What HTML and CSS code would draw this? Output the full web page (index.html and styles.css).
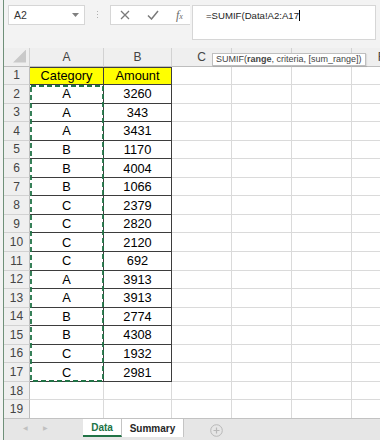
FILE: index.html
```html
<!DOCTYPE html>
<html lang="en">

<head>
    <meta charset="UTF-8">
    <title>SUMIF</title>
    <link rel="stylesheet" href="styles.css">
</head>

<body>
    <div class="app">
        <div class="toolbar">
            <div class="namebox">
                <span>A2</span>
                <svg width="7" height="4" viewBox="0 0 7 4"><path d="M0 0h7L3.5 4z" fill="#808080"/></svg>
            </div>
            <div class="grip"><span></span></div>
            <div class="fxbox">
                <svg width="10" height="10" viewBox="0 0 10 10"><path d="M1 1l8 8M9 1l-8 8" stroke="#7a7a7a" stroke-width="1.3" fill="none"/></svg>
                <svg width="12" height="10" viewBox="0 0 12 10"><path d="M1 5.5l3.5 3.5L11 1" stroke="#7a7a7a" stroke-width="1.5" fill="none"/></svg>
                <span class="fx">f<small>x</small></span>
            </div>
            <div class="formula">=SUMIF(Data!A2:A17<span class="caret"></span></div>
        </div>

        <div class="sheet">
            <div class="ch corner"><span></span></div>
            <div class="ch">A</div>
            <div class="ch">B</div>
            <div class="ch">C</div>
            <!-- D 和 E 被提示框挡住了 -->
            <div class="ch"></div>
            <div class="ch"></div>
            <div class="ch">F</div>

            <div class="rh">1</div><div class="c d top hd">Category</div><div class="c d top hd">Amount</div><div class="c"></div><div class="c"></div><div class="c"></div><div class="c"></div>
            <div class="rh">2</div><div class="c d">A</div><div class="c d">3260</div><div class="c"></div><div class="c"></div><div class="c"></div><div class="c"></div>
            <div class="rh">3</div><div class="c d">A</div><div class="c d">343</div><div class="c"></div><div class="c"></div><div class="c"></div><div class="c"></div>
            <div class="rh">4</div><div class="c d">A</div><div class="c d">3431</div><div class="c"></div><div class="c"></div><div class="c"></div><div class="c"></div>
            <div class="rh">5</div><div class="c d">B</div><div class="c d">1170</div><div class="c"></div><div class="c"></div><div class="c"></div><div class="c"></div>
            <div class="rh">6</div><div class="c d">B</div><div class="c d">4004</div><div class="c"></div><div class="c"></div><div class="c"></div><div class="c"></div>
            <div class="rh">7</div><div class="c d">B</div><div class="c d">1066</div><div class="c"></div><div class="c"></div><div class="c"></div><div class="c"></div>
            <div class="rh">8</div><div class="c d">C</div><div class="c d">2379</div><div class="c"></div><div class="c"></div><div class="c"></div><div class="c"></div>
            <div class="rh">9</div><div class="c d">C</div><div class="c d">2820</div><div class="c"></div><div class="c"></div><div class="c"></div><div class="c"></div>
            <div class="rh">10</div><div class="c d">C</div><div class="c d">2120</div><div class="c"></div><div class="c"></div><div class="c"></div><div class="c"></div>
            <div class="rh">11</div><div class="c d">C</div><div class="c d">692</div><div class="c"></div><div class="c"></div><div class="c"></div><div class="c"></div>
            <div class="rh">12</div><div class="c d">A</div><div class="c d">3913</div><div class="c"></div><div class="c"></div><div class="c"></div><div class="c"></div>
            <div class="rh">13</div><div class="c d">A</div><div class="c d">3913</div><div class="c"></div><div class="c"></div><div class="c"></div><div class="c"></div>
            <div class="rh">14</div><div class="c d">B</div><div class="c d">2774</div><div class="c"></div><div class="c"></div><div class="c"></div><div class="c"></div>
            <div class="rh">15</div><div class="c d">B</div><div class="c d">4308</div><div class="c"></div><div class="c"></div><div class="c"></div><div class="c"></div>
            <div class="rh">16</div><div class="c d">C</div><div class="c d">1932</div><div class="c"></div><div class="c"></div><div class="c"></div><div class="c"></div>
            <div class="rh">17</div><div class="c d">C</div><div class="c d">2981</div><div class="c"></div><div class="c"></div><div class="c"></div><div class="c"></div>
            <div class="rh">18</div><div class="c"></div><div class="c"></div><div class="c"></div><div class="c"></div><div class="c"></div><div class="c"></div>
            <div class="rh">19</div><div class="c"></div><div class="c"></div><div class="c"></div><div class="c"></div><div class="c"></div><div class="c"></div>

            <!-- 复制区域的虚线框 -->
            <svg class="ants" width="74" height="297" viewBox="0 0 74 297">
                <rect x="1" y="1" width="72" height="295" fill="none" stroke="#217346" stroke-width="1.8" stroke-dasharray="5 3"/>
            </svg>
            <div class="tip">SUMIF(<b>range</b>, criteria, [sum_range])</div>
        </div>

        <div class="tabs">
            <div class="nav"><span>&#9664;</span><span>&#9654;</span></div>
            <div class="tab active">Data</div>
            <div class="tab">Summary</div>
            <div class="add">
                <svg width="13" height="13" viewBox="0 0 13 13"><circle cx="6.5" cy="6.5" r="5.8" fill="none" stroke="#b8b8b8" stroke-width="1"/><path d="M6.5 3.5v6M3.5 6.5h6" stroke="#b8b8b8" stroke-width="1.2"/></svg>
            </div>
        </div>
    </div>
</body>

</html>
```

FILE: styles.css
```css
body {
    margin: 0px;
    width: 380px;
    height: 440px;
    overflow: hidden;
    background: #f3f3f3;
    font-family: "Liberation Sans", Arial, sans-serif;
    color: #000000;
}

.app {
    display: flex;
    flex-direction: column;
    height: 440px;
    margin-left: 3px;
    border-left: 1px solid #6f9079;
}

/* 上面的名称框和编辑栏 */
.toolbar {
    height: 48px;
    flex-shrink: 0;
    display: flex;
    align-items: flex-start;
    padding: 5px 4px 0px 4px;
    box-sizing: border-box;
}

.namebox {
    width: 77px;
    height: 20px;
    box-sizing: border-box;
    border: 1px solid #d6d6d6;
    background: #ffffff;
    display: flex;
    align-items: center;
    justify-content: space-between;
    padding: 0px 5px 0px 5px;
    font-size: 10.5px;
    color: #333333;
}

.grip {
    width: 25px;
    height: 20px;
    display: flex;
    align-items: center;
    justify-content: center;
}

.grip span {
    width: 1px;
    height: 9px;
    background: repeating-linear-gradient(#b0b0b0 0px, #b0b0b0 1px, transparent 1px, transparent 3px);
}

.fxbox {
    width: 80px;
    height: 20px;
    box-sizing: border-box;
    border: 1px solid #d6d6d6;
    border-right: none;
    background: #ffffff;
    display: flex;
    align-items: center;
    gap: 17px;
    padding-left: 9px;
}

.fx {
    font-family: "Liberation Serif", serif;
    font-style: italic;
    font-size: 12px;
    color: #6a6a6a;
}

.fx small {
    font-size: 8px;
}

.formula {
    flex: 1;
    height: 35px;
    margin-left: 2px;
    box-sizing: border-box;
    border: 1px solid #d6d6d6;
    background: #ffffff;
    padding: 4px 0px 0px 13px;
    font-size: 9.6px;
    line-height: 12px;
    color: #1e1e1e;
}

.caret {
    display: inline-block;
    width: 1px;
    height: 11px;
    background: #000000;
    vertical-align: -2px;
}

/* 表格 */
.sheet {
    flex: 1;
    position: relative;
    overflow: hidden;
    display: grid;
    grid-template-columns: 26px 74px 68px 60px 60px 60px 60px;
    grid-template-rows: 18.5px repeat(19, 18.55px);
    background: #ffffff;
    font-size: 12.8px;
}

.ch,
.rh {
    background: #efefef;
    color: #444444;
    display: flex;
    align-items: center;
    justify-content: center;
    box-sizing: border-box;
    font-size: 12px;
}

.ch {
    border-right: 1px solid #d2d2d2;
    border-bottom: 1px solid #bdbdbd;
}

.rh {
    border-right: 1px solid #bdbdbd;
    border-bottom: 1px solid #d2d2d2;
}

.corner {
    justify-content: flex-end;
    align-items: flex-end;
    padding: 0px 3px 3px 0px;
}

.corner span {
    width: 13px;
    height: 13px;
    background: #c9c9c9;
    clip-path: polygon(100% 0, 100% 100%, 0 100%);
}

.c {
    box-sizing: border-box;
    border-right: 1px solid #dadada;
    border-bottom: 1px solid #dadada;
    display: flex;
    align-items: center;
    justify-content: center;
}

.d {
    border-right-color: #3d3d3d;
    border-bottom-color: #3d3d3d;
}

.top {
    box-shadow: inset 0px 1px 0px #3d3d3d;
}

.hd {
    background: #ffff00;
}

.ants {
    position: absolute;
    left: 26px;
    top: 37px;
}

.tip {
    position: absolute;
    left: 208px;
    top: 5px;
    height: 13px;
    box-sizing: border-box;
    padding: 0px 3px;
    border: 1px solid #bfbfbf;
    background: #ffffff;
    font-size: 9px;
    line-height: 11px;
    color: #444444;
    white-space: nowrap;
    box-shadow: 1px 1px 1px rgba(0, 0, 0, .08);
}

/* 底部的工作表标签 */
.tabs {
    height: 22px;
    flex-shrink: 0;
    box-sizing: border-box;
    border-top: 1px solid #c2c2c2;
    background: #e6e6e6;
    display: flex;
    align-items: flex-start;
}

.nav {
    width: 79px;
    display: flex;
    gap: 15px;
    padding: 5px 0px 0px 19px;
    box-sizing: border-box;
    font-size: 6px;
    color: #c0c0c0;
}

.tab {
    height: 18px;
    box-sizing: border-box;
    background: #ffffff;
    display: flex;
    align-items: center;
    justify-content: center;
    font-size: 10px;
    font-weight: bold;
    color: #262626;
    border-right: 1px solid #c4c4c4;
}

.tab.active {
    width: 39px;
    color: #217346;
    border-bottom: 2px solid #217346;
}

.tab + .tab {
    width: 62px;
}

.add {
    padding: 4px 0px 0px 26px;
}
```
